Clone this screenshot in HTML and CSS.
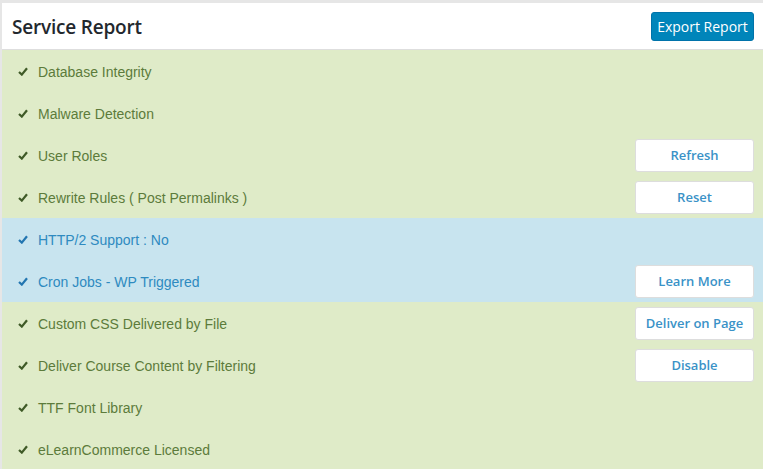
FILE: index.html
```html
<!DOCTYPE html>
<html>
<head>
<meta charset="utf-8">
<link rel="stylesheet" href="styles.css">
</head>
<body>
<div class="panel">
  <div class="header">
    <h1 class="title">Service Report</h1>
    <button class="export">Export Report</button>
  </div>
  <div class="row ok"><svg class="check" viewBox="0 0 10 9"><path d="M1 5 L3.8 7.6 L9 1.2"/></svg><span class="label">Database Integrity</span></div>
  <div class="row ok"><svg class="check" viewBox="0 0 10 9"><path d="M1 5 L3.8 7.6 L9 1.2"/></svg><span class="label">Malware Detection</span></div>
  <div class="row ok"><svg class="check" viewBox="0 0 10 9"><path d="M1 5 L3.8 7.6 L9 1.2"/></svg><span class="label">User Roles</span><button class="action">Refresh</button></div>
  <div class="row ok"><svg class="check" viewBox="0 0 10 9"><path d="M1 5 L3.8 7.6 L9 1.2"/></svg><span class="label">Rewrite Rules ( Post Permalinks )</span><button class="action">Reset</button></div>
  <div class="row info"><svg class="check" viewBox="0 0 10 9"><path d="M1 5 L3.8 7.6 L9 1.2"/></svg><span class="label">HTTP/2 Support : No</span></div>
  <div class="row info"><svg class="check" viewBox="0 0 10 9"><path d="M1 5 L3.8 7.6 L9 1.2"/></svg><span class="label">Cron Jobs - WP Triggered</span><button class="action">Learn More</button></div>
  <div class="row ok"><svg class="check" viewBox="0 0 10 9"><path d="M1 5 L3.8 7.6 L9 1.2"/></svg><span class="label">Custom CSS Delivered by File</span><button class="action">Deliver on Page</button></div>
  <div class="row ok"><svg class="check" viewBox="0 0 10 9"><path d="M1 5 L3.8 7.6 L9 1.2"/></svg><span class="label">Deliver Course Content by Filtering</span><button class="action">Disable</button></div>
  <div class="row ok"><svg class="check" viewBox="0 0 10 9"><path d="M1 5 L3.8 7.6 L9 1.2"/></svg><span class="label">TTF Font Library</span></div>
  <div class="row ok"><svg class="check" viewBox="0 0 10 9"><path d="M1 5 L3.8 7.6 L9 1.2"/></svg><span class="label">eLearnCommerce Licensed</span></div>
</div>
</body>
</html>
```
FILE: styles.css
```css
html, body {
  margin: 0;
  padding: 0;
  background: #dfebc8;
}
.panel {
  border-top: 3px solid #e6e6e6;
  border-left: 2px solid #e6e6e6;
  height: 466px;
  overflow: hidden;
}
.header {
  height: 46px;
  background: #ffffff;
  border-bottom: 1px solid #dedede;
  display: flex;
  align-items: center;
  justify-content: space-between;
  padding: 0 9px 0 10px;
}
.title {
  margin: 2px 0 0 0;
  font-family: "Open Sans", sans-serif;
  font-weight: 600;
  font-size: 19px;
  color: #23282d;
  letter-spacing: -0.2px;
}
.export {
  width: 103px;
  height: 29px;
  margin-top: 1px;
  background: #0085ba;
  border: 1px solid #0073aa;
  border-radius: 3px;
  color: #ffffff;
  font-family: "Open Sans", sans-serif;
  font-size: 14px;
  padding: 0;
}
.row {
  height: 42px;
  display: flex;
  align-items: center;
  padding: 0 9px 0 15px;
  font-family: "Liberation Sans", Arial, sans-serif;
  font-size: 14px;
}
.row .label {
  padding-top: 2px;
}
.row.ok {
  background: #dfebc8;
  color: #5c7b3b;
}
.row.info {
  background: #c8e4ef;
  color: #2e8ac0;
}
.check {
  width: 10px;
  height: 9px;
  margin: 1px 10px 0 1px;
  fill: none;
  stroke-width: 2.2;
  stroke-linecap: butt;
  stroke-linejoin: miter;
}
.row.ok .check { stroke: #3f5a27; }
.row.info .check { stroke: #2275b0; }
.label {
  flex: 1;
}
.action {
  width: 119px;
  height: 33px;
  background: #ffffff;
  border: 1px solid #dddddd;
  border-radius: 3px;
  color: #3a92c7;
  font-family: "Open Sans", sans-serif;
  font-weight: 600;
  font-size: 13px;
  padding: 0;
}
```
